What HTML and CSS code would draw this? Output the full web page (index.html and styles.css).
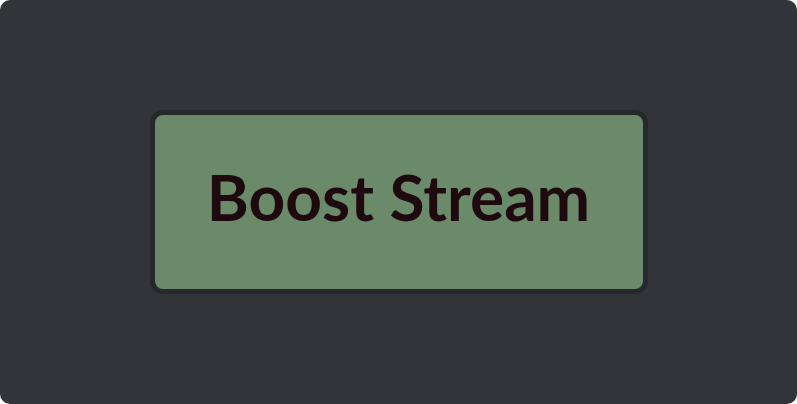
FILE: index.html
```
<!DOCTYPE html>
<html>
<head>
<meta charset="utf-8">
<link rel="stylesheet" href="styles.css">
</head>
<body>
<div class="stage">
  <button class="boost">Boost Stream</button>
</div>
</body>
</html>
```
FILE: styles.css
```
html, body {
  margin: 0;
  padding: 0;
  background: #ffffff;
}
.stage {
  width: 797px;
  height: 404px;
  background: #333439;
  border-radius: 10px;
  display: flex;
  align-items: center;
  justify-content: center;
}
.boost {
  width: 498px;
  height: 184px;
  box-sizing: border-box;
  border: 5px solid #27282d;
  border-radius: 13px;
  background: #6a8a6a;
  color: #1e0a0e;
  font-family: Lato, "Noto Sans", sans-serif;
  font-weight: 700;
  font-size: 64px;
  line-height: 1;
  padding: 0 0 10px 0;
  margin: 0;
}
```
